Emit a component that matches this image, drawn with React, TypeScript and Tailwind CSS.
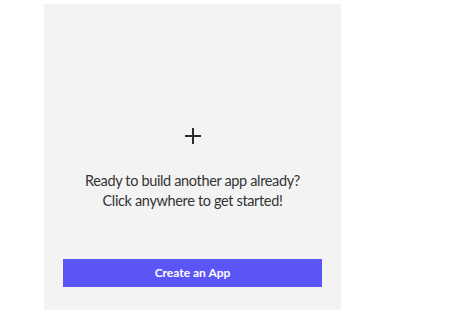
import React from 'react';

export default function App() {
  return (
    <div className="w-[474px] h-[323px] bg-white pt-[4px] pl-[44px]" style={{ fontFamily: 'Lato, "Open Sans", sans-serif' }}>
      <div className="w-[297px] h-[306px] bg-[#f3f3f3] flex flex-col items-center cursor-pointer">
        <div className="mt-[123px] text-[#2b2b2b]">
          <svg width="18" height="18" viewBox="0 0 18 18" fill="none" stroke="currentColor" strokeWidth="2">
            <path d="M9 1v16M1 9h16" />
          </svg>
        </div>
        <p className="mt-[26px] text-[14.5px] leading-[20px] tracking-[-0.35px] text-[#333333] text-center">
          Ready to build another app already?
          <br />
          Click anywhere to get started!
        </p>
        <button className="mt-auto mb-[23px] w-[259px] h-[28px] bg-[#5b55f6] text-white text-[12px] font-bold">
          Create an App
        </button>
      </div>
    </div>
  );
}
